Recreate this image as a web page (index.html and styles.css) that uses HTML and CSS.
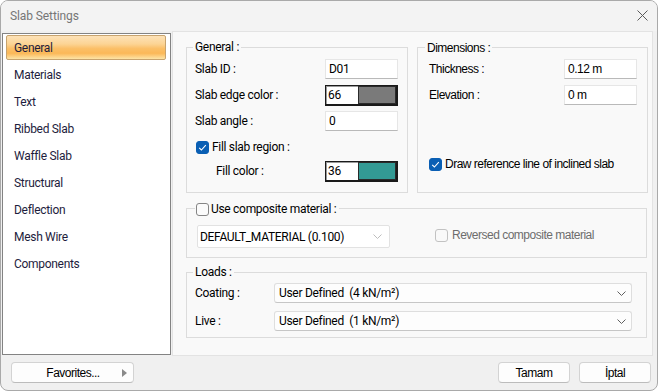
FILE: index.html
```html
<!DOCTYPE html>
<html>
<head>
<meta charset="utf-8">
<link rel="stylesheet" href="styles.css">
</head>
<body>
<div class="window">
  <div class="titlebar">
    <span class="title">Slab Settings</span>
    <svg class="close" width="11" height="11" viewBox="0 0 11 11"><path d="M0.5 0.5 L10.5 10.5 M10.5 0.5 L0.5 10.5" stroke="#5a5a5a" stroke-width="1" fill="none"/></svg>
  </div>
  <div class="main">
    <ul class="nav">
      <li class="active">General</li>
      <li>Materials</li>
      <li>Text</li>
      <li>Ribbed Slab</li>
      <li>Waffle Slab</li>
      <li>Structural</li>
      <li>Deflection</li>
      <li>Mesh Wire</li>
      <li>Components</li>
    </ul>
    <div class="panel">
      <div class="top-row">
        <div class="group g-general">
          <span class="legend">General :</span>
          <div class="row"><span class="lbl">Slab ID :</span><span class="input">D01</span></div>
          <div class="row"><span class="lbl">Slab edge color :</span><span class="colorbox"><span class="val">66</span><span class="swatch gray"></span></span></div>
          <div class="row"><span class="lbl">Slab angle :</span><span class="input">0</span></div>
          <div class="row chk-row"><span class="check on"><svg width="13" height="13" viewBox="0 0 13 13"><path d="M3.2 6.8 L5.4 9 L9.8 4.2" stroke="#fff" stroke-width="1.1" fill="none"/></svg></span><span class="lbl">Fill slab region :</span></div>
          <div class="row fill-row"><span class="lbl">Fill color :</span><span class="colorbox"><span class="val">36</span><span class="swatch teal"></span></span></div>
        </div>
        <div class="group g-dim">
          <span class="legend ms">Dimensions :</span>
          <div class="row"><span class="lbl ms">Thickness :</span><span class="input ms">0.12 m</span></div>
          <div class="row"><span class="lbl ms">Elevation :</span><span class="input ms">0 m</span></div>
          <div class="row ref-row"><span class="check on"><svg width="13" height="13" viewBox="0 0 13 13"><path d="M3.2 6.8 L5.4 9 L9.8 4.2" stroke="#fff" stroke-width="1.1" fill="none"/></svg></span><span class="lbl ms">Draw reference line of inclined slab</span></div>
        </div>
      </div>
      <div class="group g-comp">
        <span class="legend chk-legend"><span class="check"></span><span>Use composite material :</span></span>
        <div class="comp-row">
          <span class="combo disabled"><span class="ctext">DEFAULT_MATERIAL (0.100)</span><svg width="9" height="5" viewBox="0 0 9 5"><path d="M0.5 0.5 L4.5 4.5 L8.5 0.5" stroke="#bdbdbd" fill="none"/></svg></span>
          <span class="rev"><span class="check dis"></span><span class="lbl ms grey">Reversed composite material</span></span>
        </div>
      </div>
      <div class="group g-loads">
        <span class="legend">Loads :</span>
        <div class="lrow"><span class="llbl">Coating :</span><span class="combo wide"><span class="ctext">User Defined&nbsp; (4 kN/m²)</span><svg width="9" height="5" viewBox="0 0 9 5"><path d="M0.5 0.5 L4.5 4.5 L8.5 0.5" stroke="#606060" fill="none"/></svg></span></div>
        <div class="lrow"><span class="llbl">Live :</span><span class="combo wide"><span class="ctext">User Defined&nbsp; (1 kN/m²)</span><svg width="9" height="5" viewBox="0 0 9 5"><path d="M0.5 0.5 L4.5 4.5 L8.5 0.5" stroke="#606060" fill="none"/></svg></span></div>
      </div>
    </div>
  </div>
  <div class="footer">
    <span class="btn fav"><span class="btext">Favorites...</span><svg width="5" height="8" viewBox="0 0 5 8"><path d="M0 0 L5 4 L0 8 Z" fill="#8a8a8a"/></svg></span>
    <span class="spacer"></span>
    <span class="btn ok ms">Tamam</span>
    <span class="btn cancel ms">İptal</span>
  </div>
</div>
</body>
</html>
```
FILE: styles.css
```css
* { box-sizing: border-box; }
html, body { margin: 0; padding: 0; background: #ffffff; }
body { font-family: Roboto, "Noto Sans", sans-serif; font-size: 12px; letter-spacing: -0.3px; color: #000; }
ul { list-style: none; margin: 0; padding: 0; }

.window {
  width: 658px; height: 391px;
  border: 1px solid #a9a9a9;
  border-radius: 8px;
  background: #f0f0f0;
  display: flex; flex-direction: column;
  overflow: hidden;
}
.titlebar {
  height: 30px; flex: none;
  display: flex; align-items: center;
  padding: 0 9px 0 9px;
  background: #f3f3f3;
}
.title { flex: 1; color: #767676; font-size: 12px; letter-spacing: -0.1px; }
.close { margin-top: -1px; }

.main { display: flex; height: 325px; flex: none; }
.nav {
  width: 169px; height: 322px;
  margin: 2px 0 0 1px;
  border: 1px solid #838383;
  background: #fff;
  padding-top: 1px;
}
.nav li {
  height: 25px; margin: 0 4px 2px 3px;
  padding-left: 7px;
  display: flex; align-items: center;
  color: #1e1d3d;
  border: 1px solid transparent;
}
.nav li.active {
  border: 1px solid #c7a36e;
  border-radius: 2px;
  background: linear-gradient(#fde2b8 0%, #fcd494 35%, #fbbf67 55%, #fbb858 75%, #fde4a6 100%);
}

.panel {
  width: 481px; height: 325px;
  margin-left: 1px;
  border: 1px solid #e3e3e3;
  background: #f9f9f9;
  padding: 15px 0 0 13px;
}
.top-row { display: flex; gap: 9px; }
.group {
  position: relative;
  border: 1px solid #dcdcdc;
}
.legend {
  position: absolute; top: -9px; left: 6px;
  padding: 0 2px;
  background: #f9f9f9;
  line-height: 16px;
}
.g-general { width: 222px; height: 146px; padding: 11px 9px 0 8px; }
.g-dim { width: 231px; height: 146px; padding: 11px 10px 0 11px; }
.g-dim .legend { left: 7px; top: -8px; }

.row { display: flex; align-items: center; height: 20px; margin-bottom: 6px; }
.lbl { flex: 1; white-space: nowrap; }
.input {
  width: 73px; height: 20px;
  background: #fff;
  border: 1px solid #e6e6e6;
  border-bottom-color: #b9b9b9;
  padding-left: 3px;
  display: flex; align-items: center;
}
.ms { font-family: "Liberation Sans", Arial, sans-serif; font-size: 12px; letter-spacing: -0.5px; }

.colorbox {
  width: 73px; height: 21px;
  display: flex;
  border: 1px solid #1a1a1a;
  border-right-width: 2px; border-bottom-width: 2px;
  background: #fff;
}
.colorbox .val {
  width: 32px; background: #fff;
  border-left: 1px solid #9a9a9a; border-top: 1px solid #9a9a9a;
  padding-left: 1px;
  display: flex; align-items: center;
  line-height: 1;
}
.swatch { flex: 1; border: 1px solid #2a2a2a; }
.swatch.gray { background: #7a7a7a; }
.swatch.teal { background: #339a94; }

.chk-row { margin-top: 2px; margin-bottom: 4px; padding-left: 1px; }
.fill-row { padding-left: 21px; }
.ref-row { margin-top: 49px; padding-left: 0; }

.check {
  width: 13px; height: 13px; flex: none;
  border: 1px solid #858585;
  border-radius: 3px;
  background: #fbfbfb;
  margin-right: 3px;
  display: inline-flex; align-items: center; justify-content: center;
}
.check.on { background: #0a5fb4; border-color: #0a5fb4; }
.check svg { display: block; margin: -1px; }
.check.dis { border-color: #c2c2c2; background: #f9f9f9; }

.g-comp { width: 461px; height: 50px; margin-top: 15px; padding: 16px 0 0 10px; }
.chk-legend { display: flex; align-items: center; left: 8px; top: -8px; padding: 0 3px 0 1px; }
.chk-legend .check { margin-right: 2px; }
.comp-row { display: flex; align-items: center; }
.combo {
  display: flex; align-items: center;
  background: #fdfdfd;
  border: 1px solid #dedede;
  border-bottom-color: #c6c6c6;
  border-radius: 3px;
  padding: 0 6px 0 3px;
}
.combo .ctext { flex: 1; white-space: nowrap; }
.combo.disabled { width: 193px; height: 23px; border-radius: 2px; border-color: #e2e2e2; background: #fff; padding-left: 2px; padding-right: 7px; }
.rev { display: flex; align-items: center; margin-left: 45px; margin-top: -3px; }
.rev .check { margin-right: 4px; }
.grey { color: #6d6d6d; }

.g-loads { width: 461px; height: 66px; margin-top: 14px; padding: 10px 0 0 8px; }
.lrow { display: flex; align-items: center; height: 20px; margin-bottom: 8px; }
.llbl { width: 79px; }
.combo.wide { width: 358px; height: 20px; padding-left: 4px; padding-right: 5px; }

.footer {
  flex: 1;
  display: flex; align-items: flex-start;
  padding: 6px 6px 0 10px;
}
.btn {
  height: 21px;
  display: flex; align-items: center; justify-content: center;
  background: #fdfdfd;
  border: 1px solid #d3d3d3;
  border-bottom-color: #bcbcbc;
  border-radius: 4px;
}
.fav { width: 123px; font-family: "Liberation Sans", Arial, sans-serif; font-size: 12px; padding: 0 6px 0 0; letter-spacing: -0.5px; }
.fav .btext { flex: 1; padding-left: 12px; text-align: center; }
.spacer { flex: 1; }
.ok, .cancel { width: 72px; }
.cancel { margin-left: 9px; }
```
